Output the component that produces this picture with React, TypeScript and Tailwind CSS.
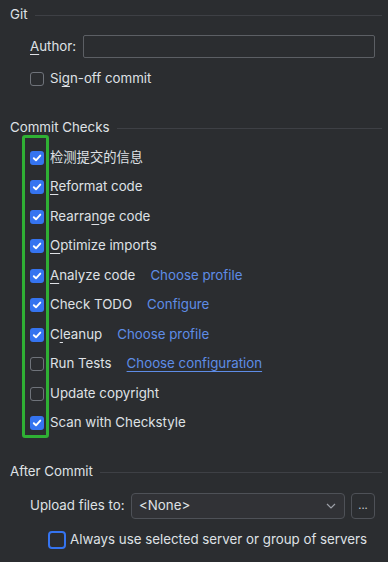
import React from "react";

const font = { fontFamily: "Inter, 'Noto Sans CJK SC', sans-serif" };

function Check({ checked }: { checked: boolean }) {
  if (checked) {
    return (
      <span className="w-[14px] h-[14px] rounded-[3px] bg-[#3574f0] flex items-center justify-center shrink-0">
        <svg width="10" height="10" viewBox="0 0 10 10">
          <path d="M1.8 5.2 L4 7.3 L8.3 2.6" fill="none" stroke="#ffffff" strokeWidth="1.9" strokeLinecap="round" strokeLinejoin="round" />
        </svg>
      </span>
    );
  }
  return <span className="w-[14px] h-[14px] rounded-[3px] border border-[#6f737a] shrink-0" />;
}

function Header({ title }: { title: string }) {
  return (
    <div className="h-[16px] flex items-center pl-[10px] pr-[6px]">
      <span className="text-[13.3px] text-[#dfe1e5] whitespace-nowrap">{title}</span>
      <div className="flex-1 h-px bg-[#3e4045] ml-[7px]" />
    </div>
  );
}

type Row = { label: React.ReactNode; checked: boolean; link?: string; underline?: boolean };

const U = ({ c }: { c: string }) => <span className="underline underline-offset-[3px]">{c}</span>;

const rows: Row[] = [
  { label: "检测提交的信息", checked: true },
  { label: <><U c="R" />eformat code</>, checked: true },
  { label: <>Rearra<U c="n" />ge code</>, checked: true },
  { label: <><U c="O" />ptimize imports</>, checked: true },
  { label: <><U c="A" />nalyze code</>, checked: true, link: "Choose profile" },
  { label: "Check TODO", checked: true, link: "Configure" },
  { label: <>C<U c="l" />eanup</>, checked: true, link: "Choose profile" },
  { label: "Run Tests", checked: false, link: "Choose configuration", underline: true },
  { label: "Update copyright", checked: false },
  { label: "Scan with Checkstyle", checked: true },
];

export default function App() {
  return (
    <div className="w-[388px] h-[562px] bg-[#2b2d30] overflow-hidden text-[13.3px] text-[#dfe1e5]" style={font}>
      <div className="pt-[7px]">
        <Header title="Git" />
      </div>
      <div className="mt-[12px] h-[23px] flex items-center pl-[30px] pr-[13px]">
        <span className="w-[53px] whitespace-nowrap"><U c="A" />uthor:</span>
        <div className="flex-1 h-[23px] border border-[#5c5f64] rounded-[2px] bg-[#2b2d30]" />
      </div>
      <div className="mt-[11px] h-[20px] flex items-center pl-[30px] gap-[6px]">
        <Check checked={false} />
        <span>Si<U c="g" />n-off commit</span>
      </div>
      <div className="mt-[31px]">
        <Header title="Commit Checks" />
      </div>
      <div className="relative pt-[7px]">
        <div className="absolute top-[-1px] bottom-0 left-[22px] w-[27px] border-[3px] border-[#2fb034] rounded-[3px]" />
        {rows.map((r, i) => (
          <div key={i} className="h-[29.5px] flex items-center pl-[30px]">
            <Check checked={r.checked} />
            <span className="ml-[6px] whitespace-nowrap">{r.label}</span>
            {r.link && (
              <span className={"ml-[15px] text-[#5e8ce6] whitespace-nowrap" + (r.underline ? " underline underline-offset-[3px]" : "")}>
                {r.link}
              </span>
            )}
          </div>
        ))}
      </div>
      <div className="mt-[26px]">
        <Header title="After Commit" />
      </div>
      <div className="mt-[13px] h-[26px] flex items-center pl-[30px] pr-[13px]">
        <span className="w-[101px] whitespace-nowrap">Upload files to:</span>
        <div className="flex-1 h-[26px] border border-[#4e5157] rounded-[4px] bg-[#313236] flex items-center pl-[7px] pr-[8px]">
          <span className="flex-1">&lt;None&gt;</span>
          <svg width="10" height="6" viewBox="0 0 10 6">
            <path d="M1 1 L5 5 L9 1" fill="none" stroke="#9da0a8" strokeWidth="1.2" />
          </svg>
        </div>
        <div className="ml-[6px] w-[24px] h-[26px] border border-[#4e5157] rounded-[4px] flex items-center justify-center text-[#c9ccd1] text-[11px] leading-none pb-[2px]">
          ...
        </div>
      </div>
      <div className="mt-[11px] h-[20px] flex items-center pl-[48px]">
        <span className="w-[18px] h-[18px] rounded-[4px] border-2 border-[#3574f0] shrink-0" />
        <span className="ml-[4px] whitespace-nowrap">Always use selected server or group of servers</span>
      </div>
    </div>
  );
}
